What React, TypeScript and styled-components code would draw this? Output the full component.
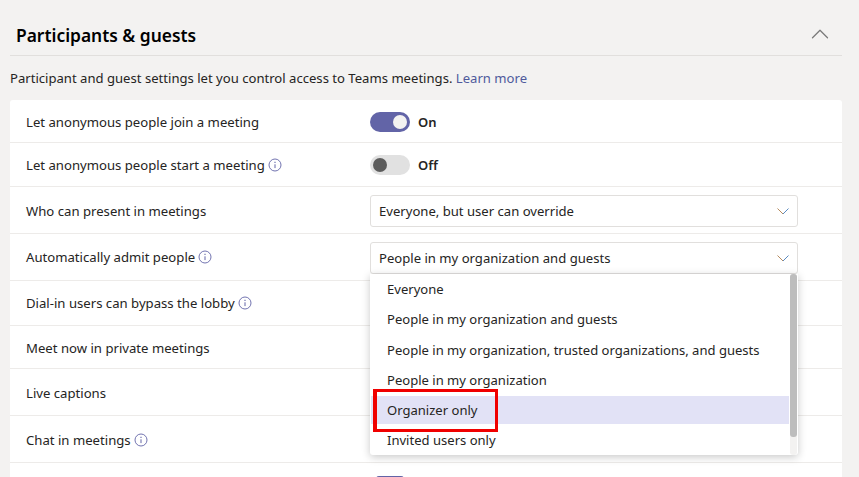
import React from "react";
import styled, { createGlobalStyle } from "styled-components";
import { ChevronUp } from "lucide-react";

const GlobalStyle = createGlobalStyle`
  html, body {
    margin: 0;
    padding: 0;
    height: 477px;
    overflow: hidden;
    background: #f3f2f1;
    font-family: "Noto Sans", "Open Sans", sans-serif;
    color: #252423;
  }
`;

const Page = styled.div`
  width: 859px;
  height: 477px;
  padding: 0 17px 0 10px;
  box-sizing: border-box;
  overflow: hidden;
`;

const Header = styled.div`
  height: 55px;
  padding: 0 7px 0 6px;
  display: flex;
  align-items: flex-end;
  justify-content: space-between;
  border-bottom: 1px solid #e1dfdd;
`;

const Title = styled.h2`
  margin: 0 0 8px;
  font-size: 17.4px;
  line-height: 24px;
  font-weight: 600;
  color: #000;
`;

const Collapse = styled.span`
  display: flex;
  margin-bottom: 6px;
  color: #7a7a7a;
`;

const Description = styled.p`
  margin: 0;
  height: 44px;
  font-size: 13.1px;
  line-height: 44px;
  color: #252423;
`;

const LearnMore = styled.a`
  color: #4f5a9c;
`;

const Card = styled.div`
  position: relative;
  background: #fff;
  border-radius: 3px 3px 0 0;
`;

const Row = styled.div<{ $h: number; $top?: number }>`
  height: ${(p) => p.$h}px;
  box-sizing: border-box;
  display: flex;
  align-items: center;
  padding: ${(p) => p.$top ?? 2}px 0 0 16px;
  border-bottom: 1px solid #edebe9;
`;

const Label = styled.div<{ $up?: boolean }>`
  width: 344px;
  flex: none;
  display: flex;
  align-items: center;
  gap: 3px;
  margin-top: ${(p) => (p.$up ? -2 : 0)}px;
  font-size: 13.15px;
  line-height: 18px;
  color: #252423;
`;

const Control = styled.div`
  display: flex;
  align-items: center;
  gap: 8px;
`;

const Track = styled.span<{ $on?: boolean }>`
  width: 40px;
  height: 20px;
  box-sizing: border-box;
  padding: 0 3px;
  border-radius: 10px;
  display: flex;
  align-items: center;
  justify-content: ${(p) => (p.$on ? "flex-end" : "flex-start")};
  background: ${(p) => (p.$on ? "#6264a7" : "#e1e1e1")};
`;

const Knob = styled.span<{ $on?: boolean }>`
  width: 14px;
  height: 14px;
  border-radius: 50%;
  background: ${(p) => (p.$on ? "#f3f2f1" : "#5c5c5c")};
`;

const State = styled.span`
  font-size: 13px;
  font-weight: 600;
  color: #252423;
`;

const Select = styled.div`
  width: 428px;
  height: 32px;
  box-sizing: border-box;
  padding: 0 8px;
  display: flex;
  align-items: center;
  justify-content: space-between;
  background: #fff;
  border: 1px solid #e1dfdd;
  border-radius: 3px;
  font-size: 13.1px;
  color: #252423;
`;

const Menu = styled.div`
  position: absolute;
  left: 360px;
  top: 174px;
  width: 428px;
  height: 181px;
  padding-right: 9px;
  box-sizing: border-box;
  background: #fff;
  border-radius: 0 0 3px 3px;
  box-shadow: 0 2px 8px rgba(0, 0, 0, 0.22);
  display: flex;
  flex-direction: column;
`;

const Option = styled.div<{ $active?: boolean; $h: number; $bottom?: number }>`
  height: ${(p) => p.$h}px;
  flex: none;
  box-sizing: border-box;
  margin-left: 1px;
  padding: 0 0 ${(p) => p.$bottom ?? 0}px 16px;
  display: flex;
  align-items: center;
  font-size: 13.05px;
  color: #252423;
  background: ${(p) => (p.$active ? "#e2e2f6" : "transparent")};
`;

const ScrollTrack = styled.div`
  position: absolute;
  right: 1px;
  top: 0;
  bottom: 0;
  width: 7px;
  border-radius: 3px;
  background: #f3f2f1;
`;

const ScrollThumb = styled.div`
  height: 163px;
  border-radius: 3px;
  background: #bdbdbd;
`;

const Callout = styled.div`
  position: absolute;
  left: 363px;
  top: 289px;
  width: 125px;
  height: 43px;
  box-sizing: border-box;
  border: 3px solid #f00000;
  border-left-width: 4px;
`;

const PartialToggle = styled.div`
  position: absolute;
  left: 366px;
  top: 376px;
  width: 28px;
  height: 3px;
  border-radius: 3px 3px 0 0;
  background: #6264a7;
`;

const InfoIcon = () => (
  <svg width="14" height="14" viewBox="0 0 14 14" fill="none" stroke="#6264a7">
    <circle cx="7" cy="7" r="6" strokeWidth="0.9" />
    <path d="M7 6.3v3.8" strokeWidth="1" />
    <path d="M7 3.8v1.1" strokeWidth="1.1" />
  </svg>
);

// left and right strokes differ in the reference (subpixel rendering)
const SelectChevron = () => (
  <svg width="12" height="7" viewBox="0 0 12 7" fill="none" strokeWidth="1">
    <path d="M.5.5L6 6" stroke="#b58a5e" />
    <path d="M6 6L11.5.5" stroke="#5a8ac0" />
  </svg>
);

const options: { text: string; h: number; bottom?: number; active?: boolean }[] = [
  { text: "Everyone", h: 30 },
  { text: "People in my organization and guests", h: 30 },
  { text: "People in my organization, trusted organizations, and guests", h: 31 },
  { text: "People in my organization", h: 31, bottom: 2 },
  { text: "Organizer only", h: 28, active: true },
  { text: "Invited users only", h: 31 },
];

export default function App() {
  return (
    <Page>
      <GlobalStyle />
      <Header>
        <Title>Participants &amp; guests</Title>
        <Collapse>
          <ChevronUp size={30} strokeWidth={1} />
        </Collapse>
      </Header>
      <Description>
        Participant and guest settings let you control access to Teams meetings.{" "}
        <LearnMore>Learn more</LearnMore>
      </Description>
      <Card>
        <Row $h={43}>
          <Label>Let anonymous people join a meeting</Label>
          <Control>
            <Track $on>
              <Knob $on />
            </Track>
            <State>On</State>
          </Control>
        </Row>
        <Row $h={44} $top={0}>
          <Label>
            Let anonymous people start a meeting <InfoIcon />
          </Label>
          <Control>
            <Track>
              <Knob />
            </Track>
            <State>Off</State>
          </Control>
        </Row>
        <Row $h={47}>
          <Label>Who can present in meetings</Label>
          <Select>
            Everyone, but user can override
            <SelectChevron />
          </Select>
        </Row>
        <Row $h={47}>
          <Label $up>
            Automatically admit people <InfoIcon />
          </Label>
          <Select>
            People in my organization and guests
            <SelectChevron />
          </Select>
        </Row>
        <Row $h={45} $top={0}>
          <Label>
            Dial-in users can bypass the lobby <InfoIcon />
          </Label>
        </Row>
        <Row $h={43}>
          <Label>Meet now in private meetings</Label>
        </Row>
        <Row $h={47}>
          <Label>Live captions</Label>
        </Row>
        <Row $h={47}>
          <Label>
            Chat in meetings <InfoIcon />
          </Label>
        </Row>
        <Row $h={40} />
        <PartialToggle />
        <Menu>
          {options.map((o) => (
            <Option key={o.text} $h={o.h} $bottom={o.bottom} $active={o.active}>
              {o.text}
            </Option>
          ))}
          <ScrollTrack>
            <ScrollThumb />
          </ScrollTrack>
        </Menu>
        <Callout />
      </Card>
    </Page>
  );
}
